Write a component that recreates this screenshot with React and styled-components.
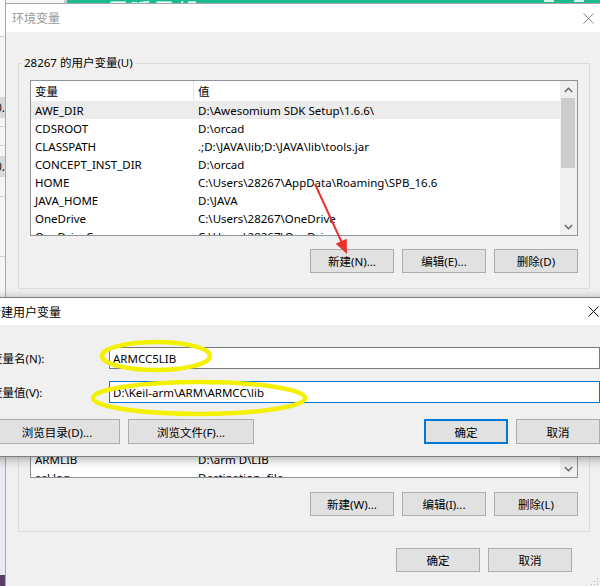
import React from "react";
import styled, { createGlobalStyle, css } from "styled-components";

const FONT = `"Noto Sans", "Noto Sans CJK SC", sans-serif`;

const GlobalStyle = createGlobalStyle`
  html, body { margin: 0; padding: 0; }
  body { font-family: ${FONT}; font-size: 11.5px; color: #000; }
  * { box-sizing: border-box; }
`;

const userVars = [
  ["AWE_DIR", "D:\\Awesomium SDK Setup\\1.6.6\\"],
  ["CDSROOT", "D:\\orcad"],
  ["CLASSPATH", ".;D:\\JAVA\\lib;D:\\JAVA\\lib\\tools.jar"],
  ["CONCEPT_INST_DIR", "D:\\orcad"],
  ["HOME", "C:\\Users\\28267\\AppData\\Roaming\\SPB_16.6"],
  ["JAVA_HOME", "D:\\JAVA"],
  ["OneDrive", "C:\\Users\\28267\\OneDrive"],
  ["OneDriveConsumer", "C:\\Users\\28267\\OneDrive"],
];

const systemVars = [
  ["ARMCC41BIN", "D:\\Keil-arm\\ARM\\ARMCC\\bin"],
  ["ARMCC41INC", "D:\\Keil-arm\\ARM\\ARMCC\\include"],
  ["ARMCC41LIB", "D:\\Keil-arm\\ARM\\ARMCC\\lib"],
  ["ARMCC5BIN", "D:\\Keil-arm\\ARM\\ARMCC\\bin"],
  ["ARMCC5INC", "D:\\Keil-arm\\ARM\\ARMCC\\include"],
  ["ARMINC", "D:\\arm D\\INC"],
  ["ARMLIB", "D:\\arm D\\LIB"],
  ["asl.log", "Destination=file"],
];

const Desktop = styled.div`
  position: relative;
  width: 600px;
  height: 586px;
  overflow: hidden;
  background: #f7f7f7;
`;

/* background windows peeking out at the edges */
const SideApp = styled.div`
  position: absolute;
  left: -90px;
  top: 0;
  width: 96px;
  height: 586px;
  display: flex;
  flex-direction: column;
  background: #f5f5f5;
  border-right: 1px solid #b5b5b5;
`;

const SideCell = styled.div`
  height: ${(p) => p.$h}px;
  flex: ${(p) => (p.$grow ? 1 : "none")};
  background: ${(p) => p.$bg || "transparent"};
  border-bottom: 1px solid ${(p) => (p.$line ? "#d4d4d4" : "transparent")};
  display: flex;
  align-items: center;
  justify-content: flex-end;
  font-size: 12px;
  color: #222;
`;

const TopApp = styled.div`
  position: absolute;
  left: 64px;
  top: -26px;
  width: 560px;
  height: 30px;
  background: #1bbb8f;
  border-left: 3px solid #c9c9c9;
  border-bottom: 1px solid #0e9a73;
  display: flex;
  align-items: flex-end;
  justify-content: space-between;
  padding: 0 10px 0 40px;
`;

const TopTitle = styled.span`
  font-size: 22px;
  line-height: 24px;
  margin-bottom: -19px;
  color: #e9fff6;
  letter-spacing: 1px;
`;

const TopControls = styled.div`
  display: flex;
  gap: 20px;
  margin-bottom: 1px;
`;

const TopControl = styled.span`
  width: 10px;
  height: 2px;
  background: #d6f7ea;
`;

const Window = styled.div`
  position: absolute;
  background: #f0f0f0;
  display: flex;
  flex-direction: column;
`;

const MainWindow = styled(Window)`
  left: 5px;
  top: 3px;
  width: 600px;
  height: 586px;
  border: 1px solid #a9a9a9;
`;

const EditDialog = styled(Window)`
  left: -20px;
  top: 297px;
  width: 630px;
  border: 1px solid #7e7e7e;
  box-shadow: 0 2px 10px rgba(0, 0, 0, 0.35);
  z-index: 2;
`;

const TitleBar = styled.div`
  height: ${(p) => p.$h}px;
  background: #fff;
  display: flex;
  align-items: center;
  justify-content: space-between;
  padding: 0 10px 0 ${(p) => p.$pl}px;
  color: ${(p) => (p.$active ? "#000" : "#999")};
  font-size: 12px;
`;

const CloseIcon = ({ color }) => (
  <svg width="11" height="11" viewBox="0 0 11 11">
    <path d="M0.5 0.5 L10.5 10.5 M10.5 0.5 L0.5 10.5" stroke={color} strokeWidth="1" fill="none" />
  </svg>
);

const MainBody = styled.div`
  flex: 1;
  padding: 23px 14px 0 12px;
  display: flex;
  flex-direction: column;
`;

const GroupBox = styled.fieldset`
  margin: 0;
  padding: 9px 11px 15px;
  border: 1px solid #dcdcdc;
  min-width: 0;
  & + & {
    margin-top: 10px;
  }
`;

const Legend = styled.legend`
  margin-left: -8px;
  padding: 0 2px;
  line-height: 16px;
  font-size: 11.5px;
`;

const ListBox = styled.div`
  height: ${(p) => p.$h}px;
  border: 1px solid #8f939b;
  background: #fff;
  display: flex;
  overflow: hidden;
`;

const Table = styled.div`
  flex: 1;
  min-width: 0;
  display: flex;
  flex-direction: column;
  overflow: hidden;
`;

const RowsViewport = styled.div`
  flex: 1;
  overflow: hidden;
`;

const RowsInner = styled.div`
  margin-top: ${(p) => -p.$shift}px;
`;

const Row = styled.div`
  flex: none;
  display: grid;
  grid-template-columns: 163px 1fr;
  height: ${(p) => (p.$header ? 20 : 18)}px;
  align-items: center;
  white-space: nowrap;
  background: ${(p) => (p.$selected ? "#ececec" : "transparent")};
`;

const Cell = styled.div`
  padding-left: 4px;
  height: 100%;
  display: flex;
  align-items: center;
  overflow: hidden;
  ${(p) =>
    p.$divider &&
    css`
      border-right: 1px solid #e5e5e5;
    `}
`;

const ScrollBar = styled.div`
  width: 17px;
  flex: none;
  background: #f0f0f0;
  display: flex;
  flex-direction: column;
`;

const ScrollArrow = styled.div`
  height: 17px;
  flex: none;
  display: flex;
  align-items: center;
  justify-content: center;
`;

const ScrollTrack = styled.div`
  flex: 1;
  padding: 0 2px 0 1px;
`;

const Thumb = styled.div`
  margin-top: ${(p) => p.$top}px;
  height: ${(p) => p.$h}px;
  background: #cdcdcd;
`;

const Chevron = ({ up }) => (
  <svg width="9" height="6" viewBox="0 0 9 6">
    <path
      d={up ? "M0.8 5 L4.5 1.2 L8.2 5" : "M0.8 1 L4.5 4.8 L8.2 1"}
      stroke="#606060"
      strokeWidth="1.3"
      fill="none"
    />
  </svg>
);

const ButtonRow = styled.div`
  display: flex;
  justify-content: flex-end;
  gap: 8px;
  margin-top: ${(p) => p.$mt}px;
  margin-right: ${(p) => p.$mr || 0}px;
`;

const Button = styled.button`
  flex: none;
  width: ${(p) => p.$w || 84}px;
  height: ${(p) => p.$h || 24}px;
  padding: 0;
  background: #e1e1e1;
  border: 1px solid #adadad;
  font-family: ${FONT};
  font-size: 11.5px;
  color: #000;
  ${(p) =>
    p.$default &&
    css`
      border: 2px solid #0078d7;
    `}
`;

const Grip = styled.div`
  position: absolute;
  right: 6px;
  bottom: 3px;
  width: 8px;
  height: 8px;
  background-image: radial-gradient(circle, #b5b5b5 0.8px, transparent 1px);
  background-size: 3px 3px;
  clip-path: polygon(100% 0, 100% 100%, 0 100%);
`;

const DialogBody = styled.div`
  padding: 22px 9px 12px 11px;
  display: flex;
  flex-direction: column;
`;

const Form = styled.div`
  display: grid;
  grid-template-columns: 117px 1fr;
  row-gap: 12px;
  align-items: center;
`;

const FieldLabel = styled.label`
  white-space: nowrap;
  margin-left: -1px;
`;

const TextField = styled.input`
  height: 22px;
  width: 100%;
  padding: 0 3px;
  border: 1px solid ${(p) => (p.$focus ? "#0078d7" : "#7a7a7a")};
  background: #fff;
  font-family: ${FONT};
  font-size: 11.5px;
  color: #000;
  outline: none;
`;

const DialogButtons = styled.div`
  display: flex;
  align-items: center;
  gap: 8px;
  margin-top: 16px;
  padding-left: 2px;
`;

const Spacer = styled.div`
  flex: 1;
`;

const Annotations = styled.svg`
  position: absolute;
  left: 0;
  top: 0;
  z-index: 5;
  pointer-events: none;
`;

const VarList = ({ rows, height, selected, shift = 0, thumbTop, thumbH }) => (
  <ListBox $h={height}>
    <Table>
      <Row $header>
        <Cell $divider>变量</Cell>
        <Cell>值</Cell>
      </Row>
      <RowsViewport>
        <RowsInner $shift={shift}>
          {rows.map(([k, v], i) => (
            <Row key={k + i} $selected={i === selected}>
              <Cell>{k}</Cell>
              <Cell>{v}</Cell>
            </Row>
          ))}
        </RowsInner>
      </RowsViewport>
    </Table>
    <ScrollBar>
      <ScrollArrow>
        <Chevron up />
      </ScrollArrow>
      <ScrollTrack>
        <Thumb $top={thumbTop} $h={thumbH} />
      </ScrollTrack>
      <ScrollArrow>
        <Chevron />
      </ScrollArrow>
    </ScrollBar>
  </ListBox>
);

export default function App() {
  return (
    <Desktop>
      <GlobalStyle />

      <SideApp>
        <SideCell $h={37} $bg="#fbfbfb" $line />
        <SideCell $h={60} />
        <SideCell $h={21} $bg="#d9d9d9">0.</SideCell>
        <SideCell $h={9} $line />
        <SideCell $h={19} $line />
        <SideCell $h={10} />
        <SideCell $h={21} $bg="#d9d9d9">0.</SideCell>
        <SideCell $h={20} $line />
        <SideCell $h={60} $line />
        <SideCell $h={200} $line />
        <SideCell $grow $bg="#e7ebef" />
        <SideCell $h={11} $bg="#5b3d68" />
      </SideApp>

      <TopApp>
        <TopTitle>早睡早起</TopTitle>
        <TopControls>
          <TopControl />
          <TopControl />
          <TopControl />
        </TopControls>
      </TopApp>

      <MainWindow>
        <TitleBar $h={28} $pl={6}>
          <span>环境变量</span>
          <CloseIcon color="#8a8a8a" />
        </TitleBar>
        <MainBody>
          <GroupBox>
            <Legend>28267 的用户变量(U)</Legend>
            <VarList rows={userVars} height={156} selected={0} thumbTop={0} thumbH={70} />
            <ButtonRow $mt={13}>
              <Button>新建(N)...</Button>
              <Button>编辑(E)...</Button>
              <Button>删除(D)</Button>
            </ButtonRow>
          </GroupBox>
          <GroupBox>
            <Legend>系统变量(S)</Legend>
            <VarList rows={systemVars} height={154} selected={-1} shift={3} thumbTop={4} thumbH={40} />
            <ButtonRow $mt={14}>
              <Button>新建(W)...</Button>
              <Button>编辑(I)...</Button>
              <Button>删除(L)</Button>
            </ButtonRow>
          </GroupBox>
          <ButtonRow $mt={16} $mr={18}>
            <Button>确定</Button>
            <Button>取消</Button>
          </ButtonRow>
        </MainBody>
        <Grip />
      </MainWindow>

      <EditDialog>
        <TitleBar $h={27} $pl={8} $active>
          <span>新建用户变量</span>
          <CloseIcon color="#111" />
        </TitleBar>
        <DialogBody>
          <Form>
            <FieldLabel>变量名(N):</FieldLabel>
            <TextField readOnly value="ARMCC5LIB" />
            <FieldLabel>变量值(V):</FieldLabel>
            <TextField readOnly $focus value="D:\Keil-arm\ARM\ARMCC\lib" />
          </Form>
          <DialogButtons>
            <Button $w={126} $h={25}>浏览目录(D)...</Button>
            <Button $w={126} $h={25}>浏览文件(F)...</Button>
            <Spacer />
            <Button $h={25} $default>确定</Button>
            <Button $h={25}>取消</Button>
          </DialogButtons>
        </DialogBody>
      </EditDialog>

      <Annotations width="600" height="586" viewBox="0 0 600 586">
        <ellipse cx="156" cy="356" rx="54" ry="14" fill="none" stroke="#f3f000" strokeWidth="4.5" />
        <ellipse cx="199" cy="398" rx="106" ry="16" fill="none" stroke="#f3f000" strokeWidth="4.5" />
        <line x1="315" y1="184" x2="342" y2="243" stroke="#e8322b" strokeWidth="2" />
        <polygon points="347,254 346.7,238.8 335.7,243.8" fill="#e8322b" />
      </Annotations>
    </Desktop>
  );
}
